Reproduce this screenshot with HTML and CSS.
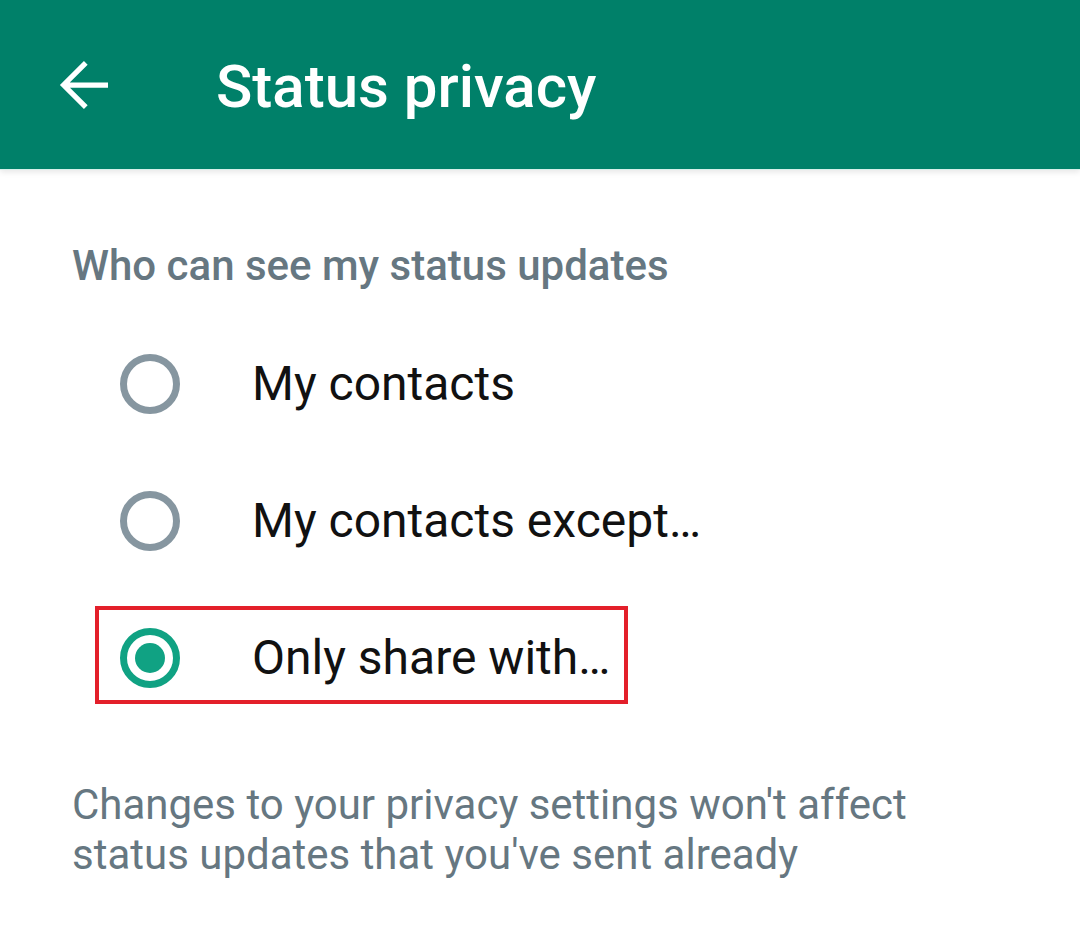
FILE: index.html
```html
<!DOCTYPE html>
<html lang="en">
<head>
<meta charset="utf-8">
<title>Status privacy</title>
<link rel="stylesheet" href="styles.css">
</head>
<body>
<header class="appbar">
  <button class="back" aria-label="Back">
    <svg viewBox="0 0 24 24" width="72" height="72"><path d="M20 12H5.5M12.6 4.6L5.2 12l7.4 7.4" fill="none" stroke="#fff" stroke-width="1.75" stroke-linejoin="miter"/></svg>
  </button>
  <h1 class="title">Status privacy</h1>
</header>
<main class="content">
  <h2 class="section-title">Who can see my status updates</h2>
  <ul class="options">
    <li class="option"><span class="radio"></span><span class="label">My contacts</span></li>
    <li class="option"><span class="radio"></span><span class="label">My contacts except…</span></li>
    <li class="option selected highlighted"><span class="radio"></span><span class="label">Only share with…</span></li>
  </ul>
  <p class="note">Changes to your privacy settings won't affect<br>status updates that you've sent already</p>
</main>
</body>
</html>
```
FILE: styles.css
```css
html, body {
  margin: 0;
  padding: 0;
}
body {
  width: 1080px;
  height: 945px;
  background: #ffffff;
  font-family: Roboto, "Liberation Sans", sans-serif;
  overflow: hidden;
}
.appbar {
  height: 169px;
  background: #008069;
  display: flex;
  align-items: center;
  box-shadow: 0 1px 0 #d6f0ea, 0 3px 6px rgba(0, 0, 0, 0.10);
  position: relative;
}
.back {
  background: none;
  border: 0;
  padding: 0;
  margin-left: 48px;
  width: 72px;
  height: 72px;
  display: flex;
}
.title {
  margin: 0 0 0 96px;
  color: #ffffff;
  font-size: 60px;
  font-weight: 500;
  line-height: 72px;
  padding-top: 5px;
}
.content {
  padding: 0 0 0 72px;
  display: flex;
  flex-direction: column;
  align-items: flex-start;
}
.section-title {
  margin: 73px 0 0 0;
  font-size: 42px;
  font-weight: 500;
  line-height: 48px;
  color: #667781;
}
.options {
  list-style: none;
  margin: 42px 0 0 23px;
  padding: 0;
  display: flex;
  flex-direction: column;
  align-items: flex-start;
  gap: 39px;
}
.option {
  display: flex;
  align-items: center;
  height: 60px;
  padding: 18px 14px 12px 21px;
  border: 4px solid transparent;
}
.option.highlighted {
  border-color: #e31f2a;
}
.radio {
  width: 60px;
  height: 60px;
  box-sizing: border-box;
  border: 7px solid #8696a0;
  border-radius: 50%;
  display: flex;
  align-items: center;
  justify-content: center;
  flex: none;
}
.option.selected .radio {
  border-color: #10a283;
}
.option.selected .radio::after {
  content: "";
  width: 30px;
  height: 30px;
  border-radius: 50%;
  background: #10a283;
}
.label {
  margin-left: 72px;
  font-size: 48px;
  color: #111111;
  line-height: 60px;
  white-space: nowrap;
}
.note {
  margin: 76px 0 0 0;
  font-size: 42px;
  line-height: 50px;
  color: #667781;
}
```
